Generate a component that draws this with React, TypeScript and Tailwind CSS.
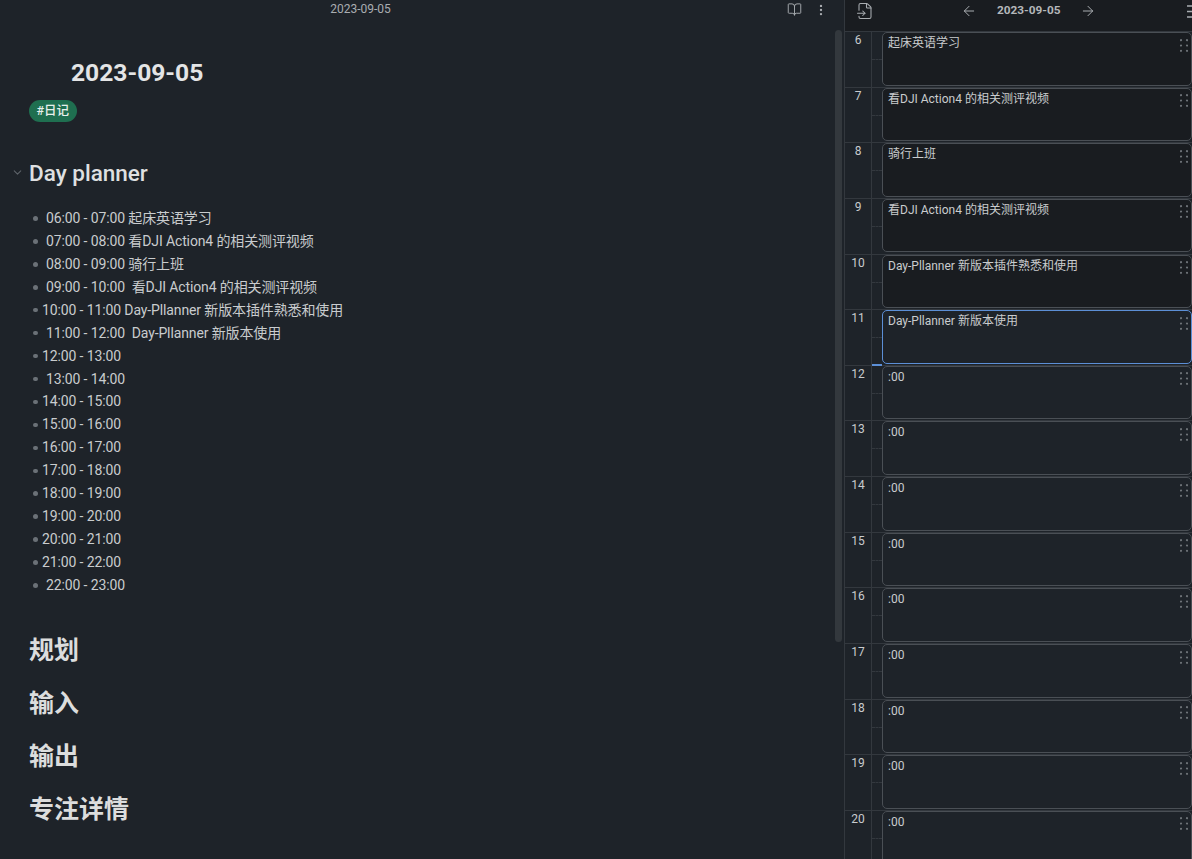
import { ArrowLeft, ArrowRight, BookOpen, ChevronDown, EllipsisVertical, FileInput } from "lucide-react";

const font = "font-['Roboto','Noto_Sans_CJK_SC',sans-serif]";

const items: [string, number][] = [
  ["06:00 - 07:00 起床英语学习", 46],
  ["07:00 - 08:00 看DJI Action4 的相关测评视频", 46],
  ["08:00 - 09:00 骑行上班", 46],
  ["09:00 - 10:00  看DJI Action4 的相关测评视频", 46],
  ["10:00 - 11:00 Day-Pllanner 新版本插件熟悉和使用", 42],
  ["11:00 - 12:00  Day-Pllanner 新版本使用", 46],
  ["12:00 - 13:00", 42],
  ["13:00 - 14:00", 46],
  ["14:00 - 15:00", 42],
  ["15:00 - 16:00", 42],
  ["16:00 - 17:00", 42],
  ["17:00 - 18:00", 42],
  ["18:00 - 19:00", 42],
  ["19:00 - 20:00", 42],
  ["20:00 - 21:00", 42],
  ["21:00 - 22:00", 42],
  ["22:00 - 23:00", 46],
];

const tasks = [
  "起床英语学习",
  "看DJI Action4 的相关测评视频",
  "骑行上班",
  "看DJI Action4 的相关测评视频",
  "Day-Pllanner 新版本插件熟悉和使用",
  "Day-Pllanner 新版本使用",
];

const hours = Array.from({ length: 15 }, (_, i) => i + 6);

function Grip() {
  return (
    <svg width="8" height="13" viewBox="0 0 8 13" className="mt-[3.5px] shrink-0 text-[#6e7378]" fill="currentColor">
      {[1, 7].map((x) =>
        [1.2, 6.5, 11.8].map((y) => <circle key={`${x}-${y}`} cx={x} cy={y} r="1.1" />)
      )}
    </svg>
  );
}

function Row({ hour }: { hour: number }) {
  const i = hour - 6;
  const past = i < 5;
  const now = i === 5;
  return (
    <div className="flex h-[55.65px] shrink-0 border-b border-[#33383e]">
      <div className="w-[27px] shrink-0 border-r border-[#33383e] text-center text-[12px] leading-[16px] text-[#c8cbce]">
        {hour}
      </div>
      <div className="relative w-[10px] shrink-0">
        <div className="absolute left-0 right-0 top-[27px] border-t border-dashed border-[#33383e]" />
        {now && <div className="absolute bottom-[-1px] left-0 right-0 h-[1.5px] bg-[#5c8fd6]" />}
      </div>
      <div
        className={`mb-[1px] flex h-[53.5px] min-w-0 flex-1 items-start justify-between rounded-[5px] border pl-[5px] pr-[3px] pt-[2px] text-[12px] leading-[17px] text-[#c9ccce] ${
          now ? "border-[#5c8fd6] bg-[#1e2329]" : past ? "border-[#4a4f55] bg-[#191c20]" : "border-[#4a4f55] bg-[#1e2329]"
        }`}
      >
        <span>{i < tasks.length ? tasks[i] : ":00"}</span>
        <Grip />
      </div>
    </div>
  );
}

export default function App() {
  return (
    <div className={`flex h-[859px] w-[1192px] overflow-hidden bg-[#1e2329] ${font}`}>
      <div className="flex w-[844px] shrink-0 flex-col">
        <div className="flex h-[28px] shrink-0 items-start">
          <div className="flex-1 pr-[66px] pt-[1px] text-center text-[12px] leading-[17px] text-[#a9adb1]">2023-09-05</div>
          <div className="mr-[16px] mt-[2px] flex items-center gap-[12px] text-[#a9adb1]">
            <BookOpen size={15} strokeWidth={1.5} />
            <EllipsisVertical size={14} strokeWidth={2} />
          </div>
        </div>
        <div className="flex min-h-0 flex-1">
          <div className="min-w-0 flex-1 pl-[29px]">
            <h1 className="mt-[29px] pl-[42px] text-[24.6px] font-bold leading-[32px] text-[#e4e5e6]">2023-09-05</h1>
            <div className="mt-[11px] flex">
              <span className="rounded-full bg-[#1f6f50] px-[7.5px] text-[12.5px] font-medium leading-[22px] text-[#e8f0ec]">#日记</span>
            </div>
            <div className="relative mt-[36px]">
              <ChevronDown size={13} strokeWidth={2} className="absolute left-[-18px] top-[8px] text-[#5d6369]" />
              <h2 className="text-[22.5px] font-medium leading-[30px] text-[#dfe0e1]">Day planner</h2>
            </div>
            <ul className="mt-[19px]">
              {items.map(([text, x]) => (
                <li key={text} className="flex h-[22.95px] items-center whitespace-pre text-[14px] tracking-[-0.12px] text-[#c9ccce]">
                  <span className="ml-[4px] size-[4.5px] shrink-0 rounded-full bg-[#6b7177]" />
                  <span className={x === 46 ? "ml-[8.5px]" : "ml-[4.5px]"}>{text}</span>
                </li>
              ))}
            </ul>
            <div className="mt-[37px] flex flex-col gap-[19px] text-[25px] font-bold leading-[34px] text-[#dcdddd]">
              <div>规划</div>
              <div>输入</div>
              <div>输出</div>
              <div>专注详情</div>
            </div>
          </div>
          <div className="mr-[2px] mt-[2px] h-[612px] w-[7px] shrink-0 rounded-[4px] bg-[#33383d]" />
        </div>
      </div>
      <div className="flex min-w-0 flex-1 flex-col border-l border-[#33383e] text-[#a9adb1]">
        <div className="flex h-[31px] shrink-0 items-center bg-[#191c20] pb-[9px]">
          <FileInput size={18} strokeWidth={1.4} className="ml-[11px] shrink-0" />
          <div className="ml-[87px] flex items-center">
            <ArrowLeft size={16} strokeWidth={1.5} />
            <span className="ml-[20px] whitespace-nowrap text-[11.8px] font-bold text-[#b4b7ba]">2023-09-05</span>
            <ArrowRight size={16} strokeWidth={1.5} className="ml-[20px]" />
          </div>
          <svg width="6" height="13" viewBox="0 0 6 13" className="ml-auto shrink-0" fill="none" stroke="currentColor" strokeWidth="1.3">
            <path d="M1 1h5M1 6.5h5M1 12h5" />
          </svg>
        </div>
        <div className="min-h-0 flex-1 overflow-hidden border-t border-[#33383e]">
          {hours.map((h) => (
            <Row key={h} hour={h} />
          ))}
        </div>
      </div>
    </div>
  );
}
